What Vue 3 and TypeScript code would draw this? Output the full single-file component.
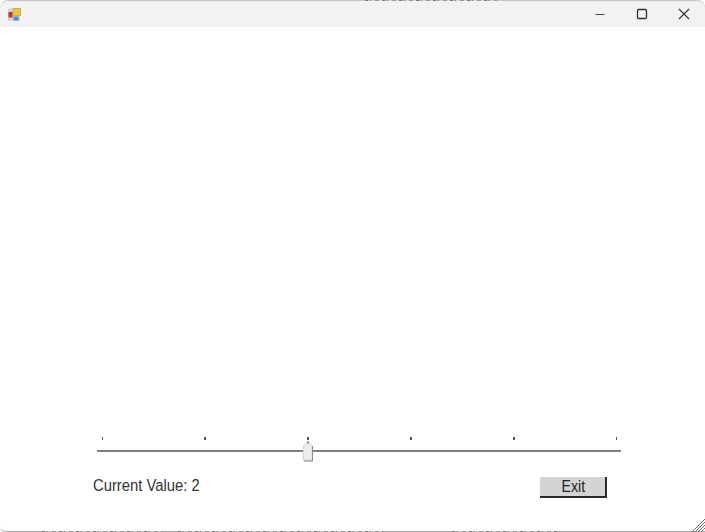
<script setup lang="ts">
const ticks: number[] = [0, 1, 2, 3, 4, 5]
</script>

<template>
  <div class="window">
    <span class="edge edge-top"></span>
    <span class="edge edge-b1"></span>
    <span class="edge edge-b2"></span>
    <span class="edge edge-b3"></span>
    <header class="titlebar">
      <svg class="app-icon" width="13" height="13" viewBox="0 0 13 13">
        <rect x="0" y="0.5" width="6" height="12" fill="#d2d2d2" />
        <rect x="6" y="8" width="6" height="5" fill="#d2d2d2" />
        <rect x="0.5" y="4" width="4" height="5.5" fill="#b8332b" />
        <rect x="5" y="0.5" width="7.5" height="7" fill="#eec53a" stroke="#b89a3a" stroke-width="0.7" />
        <rect x="5.5" y="8.5" width="5" height="4" fill="#4f8ddb" />
      </svg>
      <div class="controls">
        <svg width="12" height="12" viewBox="0 0 12 12" class="ctl-min"><path d="M0.5 6.5H9.5" stroke="#444" stroke-width="1" fill="none" /></svg>
        <svg width="12" height="12" viewBox="0 0 12 12" class="ctl-max"><rect x="1.5" y="1.5" width="9" height="9" rx="1" stroke="#333" stroke-width="1.3" fill="none" /></svg>
        <svg width="12" height="12" viewBox="0 0 12 12" class="ctl-close"><path d="M1 1L11 11M11 1L1 11" stroke="#333" stroke-width="1.1" fill="none" /></svg>
      </div>
    </header>
    <main class="content">
      <div class="slider">
        <div class="ticks">
          <span v-for="t in ticks" :key="t" class="tick"></span>
        </div>
        <div class="track">
          <svg class="thumb" width="10" height="21" viewBox="0 0 10 21">
            <path d="M5 0.5L9.5 5V19.5H0.5V5Z" fill="#ececec" stroke="#d4d4d4" stroke-width="1" />
            <path d="M9.5 5V20H1" fill="none" stroke="#8a8a8a" stroke-width="1.2" />
            <path d="M5 0V3" stroke="#666" stroke-width="1" />
          </svg>
        </div>
      </div>
      <div class="footer">
        <span class="value">Current Value: 2</span>
        <button class="exit" type="button"><span class="exit-label">Exit</span></button>
      </div>
    </main>
    <svg class="grip" width="13" height="13" viewBox="0 0 13 13">
      <path d="M0 13L13 0M3 13L13 3M6 13L13 6M9 13L13 9" stroke="#6a6a6a" stroke-width="1" fill="none" />
    </svg>
  </div>
</template>

<style>
html, body { margin: 0; background: #fff; overflow: hidden; }
</style>

<style scoped>
.window {
  position: relative;
  width: 705px;
  height: 532px;
  box-sizing: border-box;
  display: flex;
  flex-direction: column;
  background: #fff;
  border-bottom: 1px solid #a8a8a8;
  border-radius: 8px 8px 0 6px;
  font-family: "Liberation Sans", Arial, sans-serif;
}
.edge {
  position: absolute;
  height: 1px;
  z-index: 1;
  background: repeating-linear-gradient(90deg, #777 0 3px, #bcbcbc 3px 5px, #888 5px 6px, #d2d2d2 6px 10px, #999 10px 14px, #d8d8d8 14px 17px);
}
.edge-top { top: 0; left: 365px; width: 132px; }
.edge-b1 { bottom: -1px; left: 42px; width: 120px; }
.edge-b2 { bottom: -1px; left: 178px; width: 205px; }
.edge-b3 { bottom: -1px; left: 452px; width: 108px; }
.titlebar {
  height: 27px;
  flex: none;
  box-sizing: border-box;
  display: flex;
  align-items: center;
  justify-content: space-between;
  padding: 0 15px 0 8px;
  background: #f2f2f2;
  border-top: 1px solid #c4c4c4;
  border-radius: 8px 8px 0 0;
}
.app-icon { display: block; }
.controls {
  display: flex;
  align-items: center;
}
.controls svg { display: block; }
.ctl-max { margin-left: 29px; }
.ctl-close { margin-left: 30px; }
.content {
  flex: 1;
  display: flex;
  flex-direction: column;
  justify-content: flex-end;
  padding: 0 98px 33px 93px;
}
.slider {
  margin: 0 -14px 0 4px;
  display: flex;
  flex-direction: column;
}
.ticks {
  display: flex;
  justify-content: space-between;
  padding: 0 3.5px 0 4.5px;
}
.tick {
  width: 1.5px;
  height: 3px;
  background: #555;
}
.track {
  position: relative;
  height: 2px;
  margin-top: 10px;
  background: #7f7f7f;
}
.thumb {
  position: absolute;
  left: 206px;
  top: -9px;
  display: block;
}
.footer {
  display: flex;
  justify-content: space-between;
  align-items: flex-start;
  margin-top: 25px;
}
.value {
  font-size: 16px;
  line-height: 18px;
  color: #333;
  transform: scaleX(0.925);
  transform-origin: left center;
}
.exit {
  width: 67px;
  height: 21px;
  margin: 0;
  padding: 0 0 0 1px;
  box-sizing: border-box;
  background: #d4d4d4;
  border: none;
  border-right: 2px solid #2a2a2a;
  border-bottom: 2px solid #2a2a2a;
  font-family: inherit;
  font-size: 16px;
  line-height: 19px;
  color: #222;
}
.exit-label {
  display: inline-block;
  transform: scaleX(0.88);
}
.grip {
  position: absolute;
  right: 0;
  bottom: -1px;
  display: block;
}
</style>
